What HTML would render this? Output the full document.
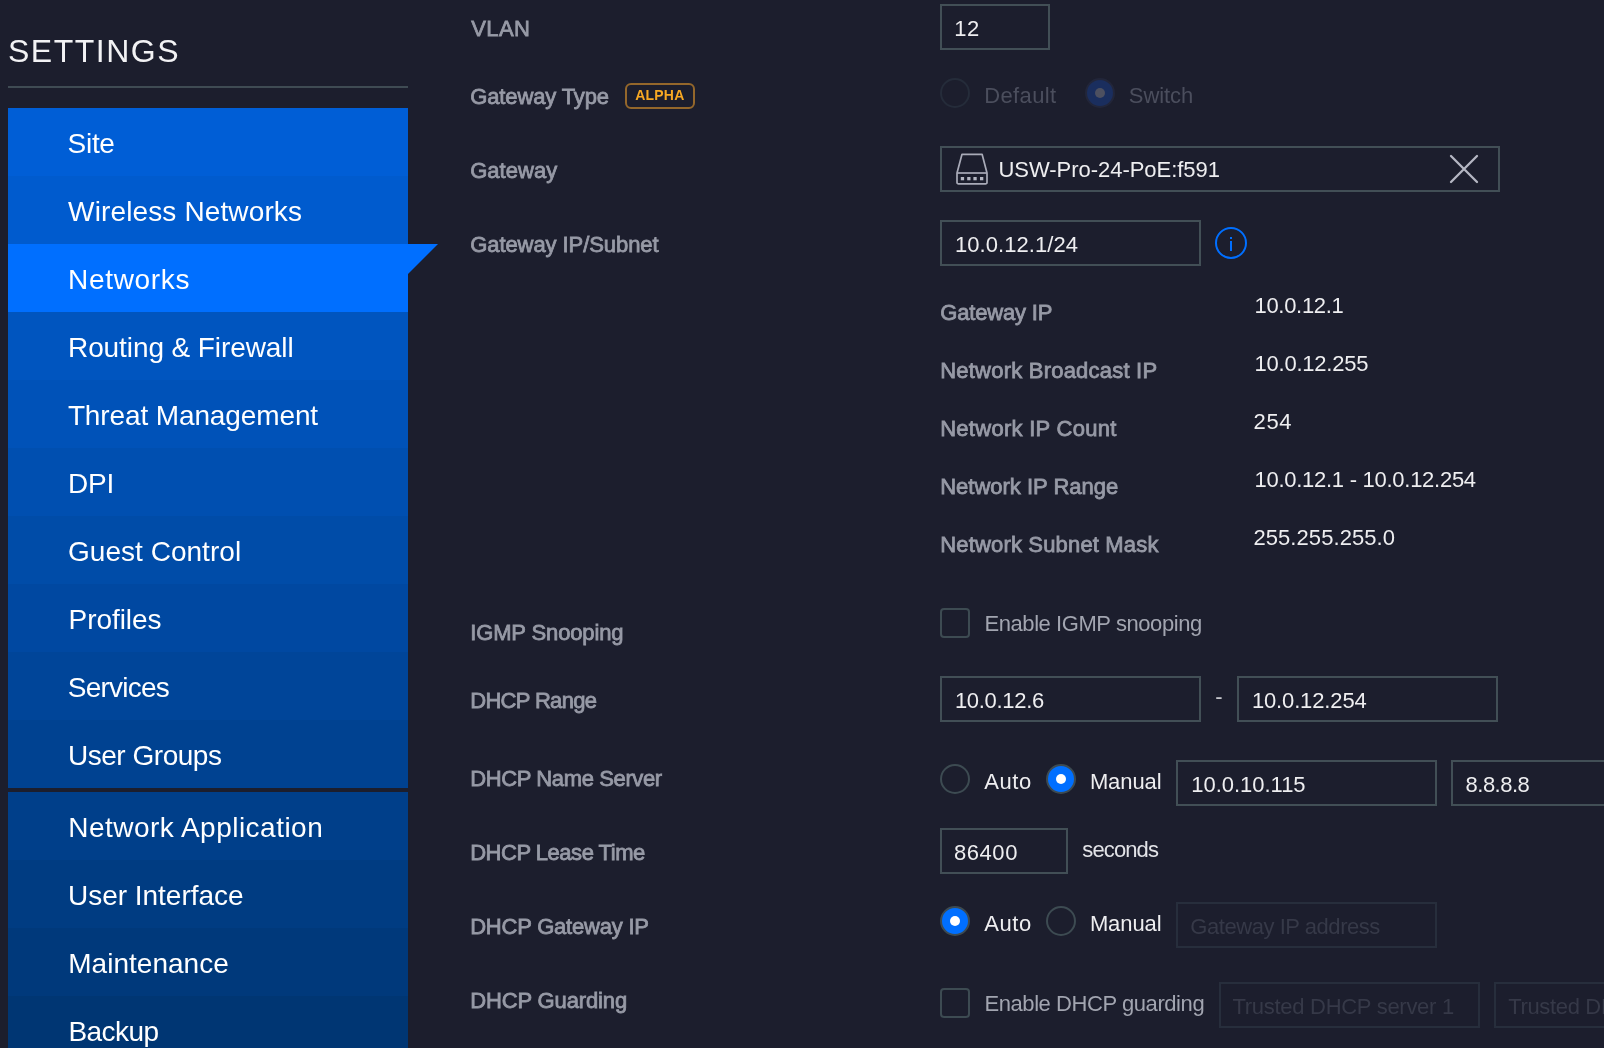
<!DOCTYPE html>
<html lang="en"><head><meta charset="utf-8"><title>UniFi Network - Settings - Networks</title>
<style>
*{box-sizing:border-box}
html,body{margin:0;padding:0}
body{width:1604px;height:1048px;overflow:hidden;background:#1c1e2d;font-family:"Liberation Sans",sans-serif;position:relative}
#app{position:absolute;left:0;top:0;width:1604px;height:1048px;overflow:hidden;will-change:transform}
.t{position:absolute;white-space:pre;line-height:1;margin:0;font-weight:400;font-style:normal}
.hr{position:absolute;left:8px;top:86px;width:400px;height:2px;background:#3f4b53}
.nav{position:absolute;left:8px;width:400px;height:68px;margin:0;padding:0;list-style:none}
.nav .t{font-size:28px;color:#fff}
.tri{position:absolute;left:408px;top:244px;width:0;height:0;border-top:30px solid #006fff;border-right:30px solid transparent}
.box{position:absolute;height:46px;border:2px solid #424f56;background:transparent}
.box.dis{border-color:#272e3c}
.radio{position:absolute;width:30px;height:30px;border-radius:50%;border:2px solid #3d4b52}
.radio.on{background:#006fff}
.radio.on::after{content:"";position:absolute;left:8px;top:8px;width:10px;height:10px;border-radius:50%;background:#fff}
.radio.dis{border-color:#252c3a}
.radio.dis.on{background:#1a2e5e;border-color:#22263a}
.radio.dis.on::after{background:#4d5060}
.cb{position:absolute;width:30px;height:30px;border-radius:4px;border:2px solid #3d4b52}
.badge{position:absolute;left:625px;top:83px;width:70px;height:26px;border:2px solid #94672b;border-radius:6px}
.info{position:absolute;left:1215px;top:227px;width:32px;height:32px;border-radius:50%;border:2px solid #006fff}
svg{position:absolute;overflow:visible}
</style></head>
<body>
<div id="app">
<aside>
<h1 style="margin:0;font-weight:400"><span class="t" style="left:7.9px;top:34.5px;font-size:32px;color:#f2f2f4;letter-spacing:1.53px;">SETTINGS</span></h1>
<div class="hr"></div>
<ul style="margin:0;padding:0">
<li class="nav" style="top:108px;background:#005ed6"><span class="t" style="left:59.6px;top:21.5px;letter-spacing:-0.3px;">Site</span></li>
<li class="nav" style="top:176px;background:#005bce"><span class="t" style="left:60.1px;top:21.5px;letter-spacing:0.13px;">Wireless Networks</span></li>
<li class="nav" style="top:244px;background:#006fff"><span class="t" style="left:60px;top:21.5px;letter-spacing:0.69px;">Networks</span></li>
<li class="nav" style="top:312px;background:#0055bf"><span class="t" style="left:60px;top:21.5px;letter-spacing:-0.09px;">Routing &amp; Firewall</span></li>
<li class="nav" style="top:380px;background:#0052b8"><span class="t" style="left:59.9px;top:21.5px;letter-spacing:-0.12px;">Threat Management</span></li>
<li class="nav" style="top:448px;background:#004fb0"><span class="t" style="left:60px;top:21.5px;letter-spacing:-0.25px;">DPI</span></li>
<li class="nav" style="top:516px;background:#004ca8"><span class="t" style="left:60px;top:21.5px;letter-spacing:0.03px;">Guest Control</span></li>
<li class="nav" style="top:584px;background:#0048a1"><span class="t" style="left:60.5px;top:21.5px;letter-spacing:-0.04px;">Profiles</span></li>
<li class="nav" style="top:652px;background:#004599"><span class="t" style="left:59.8px;top:21.5px;letter-spacing:-0.76px;">Services</span></li>
<li class="nav" style="top:720px;background:#004291"><span class="t" style="left:60px;top:21.5px;letter-spacing:-0.48px;">User Groups</span></li>
<li class="nav" style="top:792px;background:#003f8a"><span class="t" style="left:60.2px;top:21.5px;letter-spacing:0.48px;">Network Application</span></li>
<li class="nav" style="top:860px;background:#003c82"><span class="t" style="left:60px;top:21.5px;letter-spacing:-0.02px;">User Interface</span></li>
<li class="nav" style="top:928px;background:#00397b"><span class="t" style="left:60.2px;top:21.5px;letter-spacing:0.03px;">Maintenance</span></li>
<li class="nav" style="top:996px;background:#003673"><span class="t" style="left:60.5px;top:21.5px;letter-spacing:-0.58px;">Backup</span></li>
</ul>
<div class="tri"></div>
</aside>
<main>
<div class="row">
<span class="t" style="left:471.2px;top:17.5px;font-size:22px;color:#979aa6;-webkit-text-stroke:0.8px #979aa6;letter-spacing:0.43px;">VLAN</span>
<div class="box" style="left:940px;top:4px;width:110px"></div>
<span class="t" style="left:954.3px;top:18.0px;font-size:22px;color:#eeeef0;letter-spacing:0.5px;">12</span>
</div>
<div class="row">
<span class="t" style="left:470.2px;top:85.5px;font-size:22px;color:#979aa6;-webkit-text-stroke:0.8px #979aa6;letter-spacing:-0.12px;">Gateway Type</span>
<div class="badge"></div>
<span class="t" style="left:635.3px;top:88.0px;font-size:14px;color:#f7a823;font-weight:700;letter-spacing:0.18px;">ALPHA</span>
<div class="radio dis" style="left:940px;top:78px"></div>
<span class="t" style="left:984.2px;top:85.0px;font-size:22px;color:#4b4e5d;letter-spacing:0.37px;">Default</span>
<div class="radio dis on" style="left:1085px;top:78px"></div>
<span class="t" style="left:1128.8px;top:85.0px;font-size:22px;color:#4b4e5d;letter-spacing:-0.06px;">Switch</span>
</div>
<div class="row">
<span class="t" style="left:470.2px;top:159.5px;font-size:22px;color:#979aa6;-webkit-text-stroke:0.8px #979aa6;letter-spacing:0.03px;">Gateway</span>
<div class="box" style="left:940px;top:146px;width:560px"></div>
<svg style="left:955px;top:153px" width="34" height="32" viewBox="0 0 34 32" fill="none" stroke="#a9abb8" stroke-width="1.7" stroke-linejoin="round"><path d="M7 1.300h20.100l4.900 18.700v9.400a1.500 1.500 0 0 1-1.500 1.500h-27a1.500 1.500 0 0 1-1.500-1.500v-9.400z"/><path d="M2 20h30"/><g fill="#b4b6c2" stroke="none"><rect x="5.800" y="24" width="3.300" height="3.300"/><rect x="12.200" y="24" width="3.300" height="3.300"/><rect x="18.400" y="24" width="3.300" height="3.300"/><rect x="25" y="24" width="3.300" height="3.300"/></g></svg>
<span class="t" style="left:998.4px;top:159.0px;font-size:22px;color:#eeeef0;letter-spacing:-0.03px;">USW-Pro-24-PoE:f591</span>
<svg style="left:1450px;top:155px" width="28" height="28" viewBox="0 0 28 28" stroke="#b5b7c3" stroke-width="2.300" stroke-linecap="round"><path d="M1 1l26 26M27 1L1 27"/></svg>
</div>
<div class="row">
<span class="t" style="left:470.2px;top:233.5px;font-size:22px;color:#979aa6;-webkit-text-stroke:0.8px #979aa6;letter-spacing:-0.07px;">Gateway IP/Subnet</span>
<div class="box" style="left:940px;top:220px;width:261px"></div>
<span class="t" style="left:955px;top:234.0px;font-size:22px;color:#eeeef0;letter-spacing:0.06px;">10.0.12.1/24</span>
<div class="info"></div>
<svg style="left:1215px;top:227px" width="32" height="32" viewBox="0 0 32 32"><rect x="15" y="10" width="2" height="2" fill="#006fff"/><rect x="15" y="14" width="2" height="10" fill="#006fff"/></svg>
</div>
<div class="row">
<span class="t" style="left:940.2px;top:301.5px;font-size:22px;color:#979aa6;-webkit-text-stroke:0.8px #979aa6;letter-spacing:-0.16px;">Gateway IP</span>
<span class="t" style="left:1254.5px;top:294.5px;font-size:22px;color:#eeeef0;letter-spacing:-0.3px;">10.0.12.1</span>
</div>
<div class="row">
<span class="t" style="left:940.2px;top:359.5px;font-size:22px;color:#979aa6;-webkit-text-stroke:0.8px #979aa6;letter-spacing:0.22px;">Network Broadcast IP</span>
<span class="t" style="left:1254.5px;top:352.5px;font-size:22px;color:#eeeef0;letter-spacing:-0.22px;">10.0.12.255</span>
</div>
<div class="row">
<span class="t" style="left:940.2px;top:417.5px;font-size:22px;color:#979aa6;-webkit-text-stroke:0.8px #979aa6;letter-spacing:0.28px;">Network IP Count</span>
<span class="t" style="left:1253.4px;top:410.5px;font-size:22px;color:#eeeef0;letter-spacing:0.75px;">254</span>
</div>
<div class="row">
<span class="t" style="left:940.2px;top:475.5px;font-size:22px;color:#979aa6;-webkit-text-stroke:0.8px #979aa6;">Network IP Range</span>
<span class="t" style="left:1254.5px;top:468.5px;font-size:22px;color:#eeeef0;letter-spacing:-0.27px;">10.0.12.1 - 10.0.12.254</span>
</div>
<div class="row">
<span class="t" style="left:940.2px;top:533.5px;font-size:22px;color:#979aa6;-webkit-text-stroke:0.8px #979aa6;letter-spacing:0.17px;">Network Subnet Mask</span>
<span class="t" style="left:1253.4px;top:526.5px;font-size:22px;color:#eeeef0;letter-spacing:0.08px;">255.255.255.0</span>
</div>
<div class="row">
<span class="t" style="left:470.2px;top:621.5px;font-size:22px;color:#979aa6;-webkit-text-stroke:0.8px #979aa6;letter-spacing:-0.13px;">IGMP Snooping</span>
<div class="cb" style="left:940px;top:608px"></div>
<span class="t" style="left:984.5px;top:612.5px;font-size:22px;color:#a2a5b0;letter-spacing:-0.43px;">Enable IGMP snooping</span>
</div>
<div class="row">
<span class="t" style="left:470.2px;top:689.5px;font-size:22px;color:#979aa6;-webkit-text-stroke:0.8px #979aa6;letter-spacing:-0.67px;">DHCP Range</span>
<div class="box" style="left:940px;top:676px;width:261px"></div>
<span class="t" style="left:954.9px;top:690.0px;font-size:22px;color:#eeeef0;letter-spacing:-0.3px;">10.0.12.6</span>
<span class="t" style="left:1215.3px;top:686.0px;font-size:22px;color:#c8c9ce;letter-spacing:0.5px;">-</span>
<div class="box" style="left:1237px;top:676px;width:261px"></div>
<span class="t" style="left:1251.9px;top:690.0px;font-size:22px;color:#eeeef0;letter-spacing:-0.14px;">10.0.12.254</span>
</div>
<div class="row">
<span class="t" style="left:470.2px;top:767.5px;font-size:22px;color:#979aa6;-webkit-text-stroke:0.8px #979aa6;letter-spacing:-0.38px;">DHCP Name Server</span>
<div class="radio" style="left:940px;top:764px"></div>
<span class="t" style="left:984.2px;top:770.5px;font-size:22px;color:#eeeef0;letter-spacing:0.6px;">Auto</span>
<div class="radio on" style="left:1046px;top:764px"></div>
<span class="t" style="left:1089.9px;top:770.5px;font-size:22px;color:#eeeef0;letter-spacing:-0.1px;">Manual</span>
<div class="box" style="left:1176px;top:760px;width:261px"></div>
<span class="t" style="left:1191.3px;top:774.0px;font-size:22px;color:#eeeef0;letter-spacing:-0.03px;">10.0.10.115</span>
<div class="box" style="left:1451px;top:760px;width:261px"></div>
<span class="t" style="left:1465.6px;top:774.0px;font-size:22px;color:#eeeef0;letter-spacing:-0.52px;">8.8.8.8</span>
</div>
<div class="row">
<span class="t" style="left:470.2px;top:841.5px;font-size:22px;color:#979aa6;-webkit-text-stroke:0.8px #979aa6;letter-spacing:-0.48px;">DHCP Lease Time</span>
<div class="box" style="left:940px;top:828px;width:128px"></div>
<span class="t" style="left:954px;top:842.0px;font-size:22px;color:#eeeef0;letter-spacing:0.55px;">86400</span>
<span class="t" style="left:1082.3px;top:839.0px;font-size:22px;color:#e2e3e7;letter-spacing:-0.88px;">seconds</span>
</div>
<div class="row">
<span class="t" style="left:470.2px;top:915.5px;font-size:22px;color:#979aa6;-webkit-text-stroke:0.8px #979aa6;letter-spacing:-0.21px;">DHCP Gateway IP</span>
<div class="radio on" style="left:940px;top:906px"></div>
<span class="t" style="left:984.2px;top:912.5px;font-size:22px;color:#eeeef0;letter-spacing:0.6px;">Auto</span>
<div class="radio" style="left:1046px;top:906px"></div>
<span class="t" style="left:1089.9px;top:912.5px;font-size:22px;color:#eeeef0;letter-spacing:-0.1px;">Manual</span>
<div class="box dis" style="left:1176px;top:902px;width:261px"></div>
<span class="t" style="left:1190.3px;top:916.0px;font-size:22px;color:#363948;letter-spacing:-0.45px;">Gateway IP address</span>
</div>
<div class="row">
<span class="t" style="left:470.2px;top:989.5px;font-size:22px;color:#979aa6;-webkit-text-stroke:0.8px #979aa6;letter-spacing:-0.13px;">DHCP Guarding</span>
<div class="cb" style="left:940px;top:988px"></div>
<span class="t" style="left:984.5px;top:993.0px;font-size:22px;color:#a2a5b0;letter-spacing:-0.43px;">Enable DHCP guarding</span>
<div class="box dis" style="left:1219px;top:982px;width:261px"></div>
<span class="t" style="left:1232.4px;top:996.0px;font-size:22px;color:#363948;letter-spacing:-0.28px;">Trusted DHCP server 1</span>
<div class="box dis" style="left:1494px;top:982px;width:261px"></div>
<span class="t" style="left:1508.2px;top:996.0px;font-size:22px;color:#363948;letter-spacing:-0.34px;">Trusted DHCP server 2</span>
</div>
</main>
</div>
</body></html>
